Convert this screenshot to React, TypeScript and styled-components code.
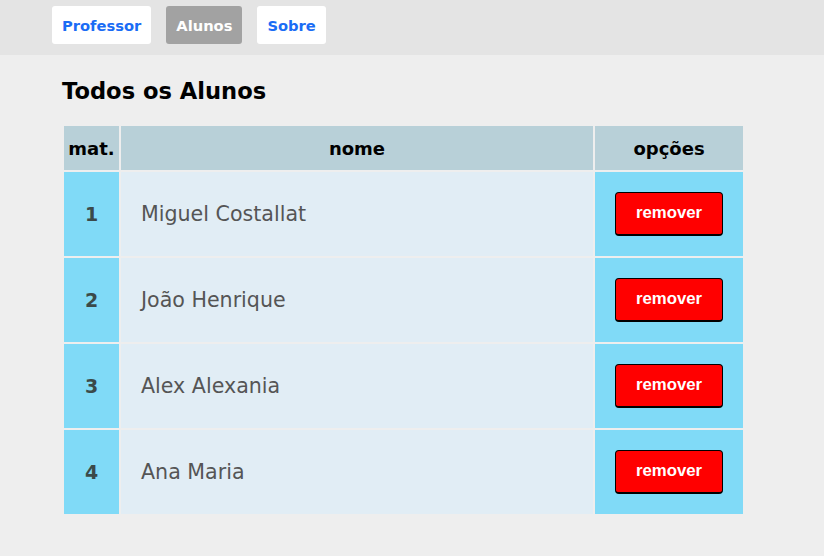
import styled, { createGlobalStyle } from 'styled-components'

const GlobalStyle = createGlobalStyle`
  body {
    margin: 0;
    background-color: #eeeeee;
    font-family: 'DejaVu Sans', 'Noto Sans', sans-serif;
  }
`

const alunos = [
  { mat: 1, nome: 'Miguel Costallat' },
  { mat: 2, nome: 'João Henrique' },
  { mat: 3, nome: 'Alex Alexania' },
  { mat: 4, nome: 'Ana Maria' },
]

const links = ['Professor', 'Alunos', 'Sobre']

export default function App() {
  return (
    <>
      <GlobalStyle />
      <Nav>
        {links.map((l) => (
          <NavLink key={l} active={l === 'Alunos'}>
            {l}
          </NavLink>
        ))}
      </Nav>
      <Main>
        <Title>Todos os Alunos</Title>
        <Table>
          <colgroup>
            <col style={{ width: 55 }} />
            <col style={{ width: 472 }} />
            <col style={{ width: 148 }} />
          </colgroup>
          <thead>
            <tr>
              <Th>mat.</Th>
              <Th>nome</Th>
              <Th>opções</Th>
            </tr>
          </thead>
          <tbody>
            {alunos.map((a) => (
              <tr key={a.mat}>
                <MatCell>{a.mat}</MatCell>
                <NameCell>{a.nome}</NameCell>
                <OptionsCell>
                  <RemoveButton>remover</RemoveButton>
                </OptionsCell>
              </tr>
            ))}
          </tbody>
        </Table>
      </Main>
    </>
  )
}

const Nav = styled.nav`
  height: 55px;
  background-color: #e4e4e4;
  display: flex;
  align-items: flex-start;
  gap: 15px;
  padding: 6px 0 0 52px;
  box-sizing: border-box;
`

const NavLink = styled.a<{ active?: boolean }>`
  display: flex;
  align-items: center;
  height: 38px;
  padding: 0 10px;
  border-radius: 3px;
  font-size: 14.7px;
  font-weight: bold;
  cursor: pointer;
  background-color: ${(p) => (p.active ? '#a2a2a2' : '#ffffff')};
  color: ${(p) => (p.active ? '#ffffff' : '#1a6cf5')};
`

const Main = styled.main`
  padding: 0 62px;
`

const Title = styled.h2`
  margin: 0;
  padding-top: 23px;
  height: 69px;
  box-sizing: border-box;
  font-size: 22.6px;
  font-weight: bold;
  color: #000;
`

const Table = styled.table`
  border-spacing: 2px;
  table-layout: fixed;
  width: 683px;
`

const Th = styled.th`
  height: 44px;
  padding: 0;
  background-color: #b8d0d8;
  font-size: 18px;
  font-weight: bold;
  color: #000;
  text-align: center;
`

const MatCell = styled.td`
  height: 84px;
  padding: 0;
  background-color: #80daf7;
  color: #3b4a4a;
  font-size: 19px;
  font-weight: bold;
  text-align: center;
`

const NameCell = styled.td`
  padding: 0 20px;
  background-color: #e1edf5;
  color: #555555;
  font-size: 20.6px;
`

const OptionsCell = styled.td`
  padding: 0 0 1px;
  background-color: #80daf7;
  text-align: center;
`

const RemoveButton = styled.button`
  width: 108px;
  height: 44px;
  background-color: #ff0000;
  color: #ffffff;
  border: 1px solid #000;
  border-bottom-width: 2px;
  border-radius: 4px;
  font-family: 'Liberation Sans', Arial, sans-serif;
  font-size: 16.8px;
  font-weight: bold;
  cursor: pointer;
`
